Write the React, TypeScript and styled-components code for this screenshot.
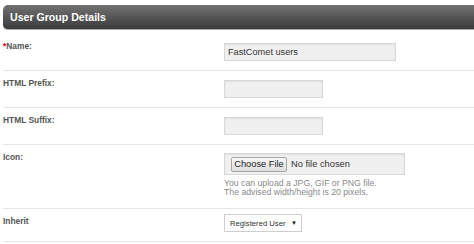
import React from "react";
import styled, { createGlobalStyle } from "styled-components";

const Global = createGlobalStyle`
  html, body { margin: 0; padding: 0; background: #fff; }
  body { font-family: "Liberation Sans", Arial, sans-serif; overflow: hidden; }
`;

const Page = styled.div`
  padding: 5px 0 0 3px;
`;

const Header = styled.div`
  height: 24px;
  display: flex;
  align-items: center;
  padding-left: 7px;
  border-radius: 5px 0 0 5px;
  background: linear-gradient(#727272, #565656 50%, #3a3a3a);
  border-bottom: 1px solid #a9a9a9;
  color: #fff;
  font-weight: bold;
  font-size: 10.6px;
  margin-bottom: 4px;
`;

const Row = styled.div`
  display: grid;
  grid-template-columns: 221px 1fr;
  border-bottom: 1px solid #e6e6e6;
`;

const Label = styled.div`
  padding-top: 6px;
  line-height: 12px;
  font-size: 8.4px;
  font-weight: bold;
  color: #555;
`;

const Req = styled.span`
  color: #d00000;
`;

const Field = styled.div<{ $top?: number; $bottom?: number }>`
  padding: ${(p) => p.$top ?? 9}px 0 ${(p) => p.$bottom ?? 9}px;
  display: flex;
  flex-direction: column;
  align-items: flex-start;
`;

const TextBox = styled.div<{ $w: number }>`
  box-sizing: border-box;
  width: ${(p) => p.$w}px;
  height: 18px;
  background: #f0f0f0;
  border: 1px solid #d8d8d8;
  box-shadow: inset 0 1px 2px rgba(0, 0, 0, 0.07);
  padding-left: 3px;
  display: flex;
  align-items: center;
  font-size: 9.2px;
  color: #333;
`;

const FileBox = styled.div`
  box-sizing: border-box;
  width: 181px;
  height: 22px;
  background: #f0f0f0;
  border: 1px solid #d8d8d8;
  box-shadow: inset 0 1px 2px rgba(0, 0, 0, 0.07);
  padding-left: 6px;
  display: flex;
  align-items: center;
  gap: 4px;
  font-size: 9.3px;
  color: #333;
`;

const FileButton = styled.div`
  box-sizing: border-box;
  height: 15px;
  width: 56px;
  display: flex;
  align-items: center;
  justify-content: center;
  background: linear-gradient(#f8f8f8, #dedede);
  border: 1px solid #a5a5a5;
  border-radius: 2px;
  color: #222;
  font-size: 9.3px;
`;

const Help = styled.div`
  margin-top: 4px;
  font-size: 8.7px;
  line-height: 9px;
  color: #8a8a8a;
`;

const SelectBox = styled.div`
  box-sizing: border-box;
  width: 78px;
  height: 18px;
  background: #fff;
  border: 1px solid #cfcfcf;
  display: flex;
  align-items: center;
  justify-content: space-between;
  padding: 0 4px 0 5px;
  font-size: 7.7px;
  color: #333;
`;

const Arrow = styled.span`
  font-size: 6px;
  color: #111;
`;

export default function App() {
  return (
    <>
      <Global />
      <Page>
        <Header>User Group Details</Header>
        <Row>
          <Label>
            <Req>*</Req>Name:
          </Label>
          <Field>
            <TextBox $w={172}>FastComet users</TextBox>
          </Field>
        </Row>
        <Row>
          <Label>HTML Prefix:</Label>
          <Field>
            <TextBox $w={99} />
          </Field>
        </Row>
        <Row>
          <Label>HTML Suffix:</Label>
          <Field>
            <TextBox $w={99} />
          </Field>
        </Row>
        <Row>
          <Label>Icon:</Label>
          <Field $top={8} $bottom={11}>
            <FileBox>
              <FileButton>Choose File</FileButton>
              <span>No file chosen</span>
            </FileBox>
            <Help>
              You can upload a JPG, GIF or PNG file.
              <br />
              The advised width/height is 20 pixels.
            </Help>
          </Field>
        </Row>
        <Row>
          <Label>Inherit</Label>
          <Field $top={5} $bottom={9}>
            <SelectBox>
              <span>Registered User</span>
              <Arrow>▼</Arrow>
            </SelectBox>
          </Field>
        </Row>
      </Page>
    </>
  );
}
